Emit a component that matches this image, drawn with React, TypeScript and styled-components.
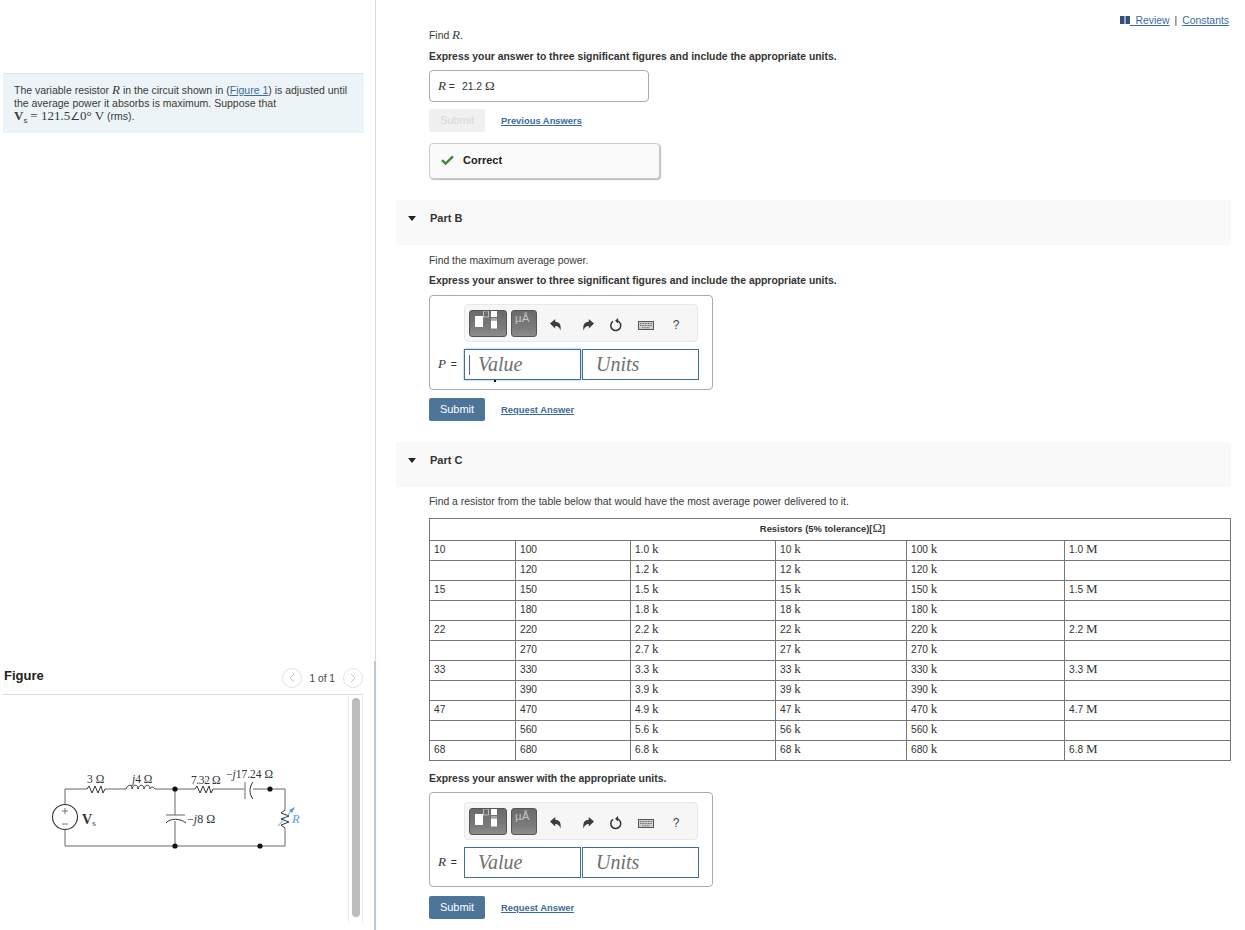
import React from "react";
import styled, { createGlobalStyle } from "styled-components";

const GlobalStyle = createGlobalStyle`
  html, body {
    margin: 0;
    padding: 0;
    background: #fff;
    height: 930px;
    overflow: hidden;
    font-family: "Liberation Sans", Arial, sans-serif;
    color: #333;
  }
`;

const Page = styled.div`
  display: grid;
  grid-template-columns: 376px 1fr;
  width: 1245px;
  height: 930px;
  overflow: hidden;
`;

const LeftColumn = styled.aside`
  display: flex;
  flex-direction: column;
  justify-content: space-between;
  height: 930px;
  box-sizing: border-box;
  padding: 73px 0 7px 3px;
  border-right: 1px solid #d9d9e6;
  position: relative;
`;

const ResizeEdge = styled.div`
  position: absolute;
  right: -1px;
  bottom: 0;
  width: 2px;
  height: 269px;
  background: #bcc6de;
`;

const IntroBox = styled.div`
  width: 361px;
  height: 60px;
  box-sizing: border-box;
  padding: 10px 10px 0 11px;
  background: #ecf4f7;
  border-top: 1px solid #dde6ea;
  font-size: 10.5px;
  line-height: 13px;
  color: #3a3a3a;
`;

const Math = styled.span`
  font-family: "Liberation Serif", "DejaVu Sans", serif;
  font-size: 13px;
  line-height: 0;
  font-weight: normal;
`;

const MathItalic = styled(Math)`
  font-style: italic;
`;

const MathBold = styled(Math)`
  font-weight: bold;
`;

const AngleSign = styled.span`
  font-family: "DejaVu Sans", sans-serif;
  font-size: 11px;
`;

const Sub = styled.sub`
  font-size: 8px;
  line-height: 0;
`;

const NoWrap = styled.span`
  white-space: nowrap;
`;

const TextLink = styled.a`
  color: #3b6d9c;
  text-decoration: underline;
`;

const FigurePanel = styled.section`
  width: 360px;
`;

const FigureHeader = styled.div`
  display: flex;
  align-items: flex-end;
  justify-content: space-between;
  height: 42px;
  padding: 0 0 6px 1px;
  box-sizing: border-box;
  border-bottom: 1px solid #dedede;
`;

const FigureTitle = styled.h2`
  margin: 0 0 5px;
  font-size: 13px;
  line-height: 15px;
  font-weight: bold;
  color: #222;
`;

const Pager = styled.div`
  display: flex;
  align-items: center;
  gap: 8px;
  font-size: 10.2px;
  color: #444;
`;

const PagerButton = styled.span`
  display: flex;
  align-items: center;
  justify-content: center;
  width: 20px;
  height: 20px;
  border: 1px solid #e3e3e3;
  border-radius: 50%;
  box-sizing: border-box;
  color: #c4c4c4;
`;

const FigureBody = styled.div`
  display: flex;
  height: 228px;
`;

const FigureCanvas = styled.div`
  flex: 1;
  padding: 60px 0 0 37px;
`;

const ScrollTrack = styled.div`
  width: 15px;
  box-sizing: border-box;
  padding: 3px 0 0 3px;
  border-left: 1px solid #ececec;
  border-right: 1px solid #ececec;
`;

const ScrollThumb = styled.div`
  width: 8px;
  height: 219px;
  background: #bcbcbc;
  border-radius: 4px;
`;

const RightColumn = styled.main`
  display: flex;
  flex-direction: column;
  padding: 0 14px 0 20px;
  min-width: 0;
`;

const TopLinks = styled.div`
  display: flex;
  justify-content: flex-end;
  align-items: center;
  height: 14px;
  margin-top: 13px;
  margin-right: 2px;
  font-size: 10.4px;
  color: #444;
  gap: 5px;
`;

const BookLink = styled(TextLink)`
  display: inline-flex;
  align-items: center;
  white-space: pre;
`;

const PartBody = styled.div`
  display: flex;
  flex-direction: column;
  align-items: flex-start;
  padding-left: 33px;
`;

const Prompt = styled.p<{ $top: number }>`
  margin: ${(p) => p.$top}px 0 0;
  font-size: 10.4px;
  line-height: 13px;
  color: #3a3a3a;
`;

const Instruction = styled.p<{ $top: number }>`
  margin: ${(p) => p.$top}px 0 0;
  font-size: 10.4px;
  font-weight: bold;
  line-height: 13px;
  color: #333;
`;

const AnswerShown = styled.div`
  display: flex;
  align-items: center;
  gap: 7px;
  width: 220px;
  height: 32px;
  margin-top: 7px;
  padding-left: 8px;
  box-sizing: border-box;
  border: 1px solid #aaa;
  border-radius: 4px;
  font-size: 10.4px;
  color: #333;
`;

const ActionRow = styled.div<{ $top: number }>`
  display: flex;
  align-items: center;
  gap: 16px;
  margin-top: ${(p) => p.$top}px;
`;

const SubmitButton = styled.button<{ $disabled?: boolean }>`
  width: 56px;
  height: 23px;
  padding: 0 0 2px;
  border: none;
  border-radius: 2px;
  font-family: inherit;
  font-size: 11px;
  background: ${(p) => (p.$disabled ? "#f0f0f0" : "#4d7499")};
  color: ${(p) => (p.$disabled ? "#d6d6d6" : "#fff")};
`;

const SmallLink = styled(TextLink)`
  font-size: 9.4px;
  font-weight: bold;
`;

const Feedback = styled.div`
  display: flex;
  align-items: center;
  gap: 9px;
  width: 231px;
  height: 36px;
  margin-top: 11px;
  padding: 0 0 2px 11px;
  box-sizing: border-box;
  border: 1px solid #ccc;
  border-radius: 4px;
  background: #fafafa;
  box-shadow: 1px 1px 1px #bbb;
  font-size: 11px;
  font-weight: bold;
  color: #222;
`;

const PartBar = styled.div<{ $top: number }>`
  display: flex;
  align-items: center;
  gap: 14px;
  height: 45px;
  margin-top: ${(p) => p.$top}px;
  padding: 0 0 9px 12px;
  box-sizing: border-box;
  background: #f9f9f9;
  font-size: 11px;
  font-weight: bold;
  color: #333;
`;

const Caret = styled.span`
  width: 0;
  height: 0;
  border-left: 4.5px solid transparent;
  border-right: 4.5px solid transparent;
  border-top: 5px solid #222;
`;

const AnswerBox = styled.div<{ $top: number; $pad: number }>`
  display: flex;
  flex-direction: column;
  width: 284px;
  height: 95px;
  margin-top: ${(p) => p.$top}px;
  padding: ${(p) => p.$pad}px 0 0 34px;
  box-sizing: border-box;
  border: 1px solid #aaa;
  border-radius: 4px;
`;

const Toolbar = styled.div`
  display: flex;
  align-items: center;
  width: 234px;
  height: 38px;
  box-sizing: border-box;
  padding-left: 4px;
  background: #f6f6f6;
  border: 1px solid #e8e8e8;
  border-radius: 4px;
`;

const GreyButton = styled.span<{ $width: number; $left: number }>`
  display: block;
  width: ${(p) => p.$width}px;
  height: 27px;
  margin-left: ${(p) => p.$left}px;
  flex: none;
  border-radius: 3px;
  background: linear-gradient(#6a6a6a, #7c7c7c 70%, #8d8d8d);
  border: 1px solid #555;
  box-sizing: border-box;
  position: relative;
  color: #cfcfcf;
`;

const MuLabel = styled.span`
  position: absolute;
  left: 3px;
  top: 1px;
  font-family: "Liberation Sans", sans-serif;
  font-size: 11.5px;
  color: #c4c4c4;
`;

const ToolIcon = styled.span<{ $width: number }>`
  display: flex;
  align-items: center;
  justify-content: center;
  width: ${(p) => p.$width}px;
  flex: none;
  margin-top: 4px;
  font-size: 12px;
  color: #444;
`;

const InputRow = styled.div`
  display: flex;
  gap: 1px;
  margin-top: 7px;
  position: relative;
`;

const VarLabel = styled.span`
  position: absolute;
  left: -26px;
  top: 10px;
  font-size: 10.4px;
  word-spacing: 2px;
  color: #333;
`;

const ValueField = styled.div<{ $focused?: boolean }>`
  display: flex;
  align-items: center;
  width: 117px;
  height: 31px;
  padding-left: 13px;
  box-sizing: border-box;
  border: 1px solid #3f6f98;
  font-family: "Liberation Serif", serif;
  font-style: italic;
  font-size: 20px;
  color: #6f6f6f;
  position: relative;
  box-shadow: ${(p) => (p.$focused ? "0 0 2px #7ea6cf" : "none")};
`;

const CursorBar = styled.span`
  position: absolute;
  left: 4px;
  top: 5px;
  width: 1px;
  height: 20px;
  background: #4a63c8;
`;

const StrayDot = styled.span`
  position: absolute;
  left: 29px;
  bottom: -3px;
  width: 2px;
  height: 2px;
  background: #111;
`;

const ResistorTable = styled.table`
  width: 801px;
  margin-top: 10px;
  border-collapse: collapse;
  table-layout: fixed;
  font-size: 10.2px;
  color: #333;
  td, th {
    height: 19px;
    padding: 0 0 2px 4px;
    border: 1px solid #777;
    text-align: left;
    font-weight: normal;
    box-sizing: border-box;
  }
  th {
    height: 22px;
    text-align: center;
    font-weight: bold;
    font-size: 9.4px;
    padding: 0 15px 2px 0;
  }
  tr {
    height: 20px;
  }
`;

const UndoIcon = ({ flip }: { flip?: boolean }) => (
  <svg width="12" height="12" viewBox="0 0 12 12" style={flip ? { transform: "scaleX(-1)" } : undefined}>
    <path d="M0 4.5 L5.2 0 V2.8 C9 2.8 11.5 5.5 10.5 11.5 C9.8 8.8 8 7 5.2 7 V9.5 Z" fill="#3d3d3d" />
  </svg>
);

const ResetIcon = () => (
  <svg width="14" height="14" viewBox="0 0 14 14">
    <path d="M8.6 2.9 A5 5 0 1 1 4 3.4" fill="none" stroke="#333" strokeWidth="1.5" />
    <path d="M7.6 0 L7.6 5.6 L10.6 2.8 Z" fill="#333" transform="rotate(180 7.6 2.8) translate(-1.5 0)" />
  </svg>
);

const KeyboardIcon = () => (
  <svg width="16" height="9" viewBox="0 0 16 9">
    <rect x="0.5" y="0.5" width="15" height="8" fill="#cfcfcf" stroke="#555" />
    <path d="M2 2.5 H14 M2 4.5 H14 M4 6.7 H12" stroke="#6a6a6a" strokeWidth="1" strokeDasharray="1 0.6" />
  </svg>
);

const TemplateGlyph = () => (
  <svg width="36" height="25" viewBox="0 0 36 25" style={{ display: "block" }}>
    <rect x="5" y="5" width="8" height="11" fill="#fff" />
    <rect x="13.5" y="0" width="5" height="6" fill="none" stroke="#cfcfcf" strokeWidth="0.8" />
    <rect x="21" y="0" width="6" height="6" fill="#fff" />
    <rect x="21" y="7.5" width="6" height="1" fill="#ddd" />
    <rect x="21" y="9.5" width="6" height="8" fill="#fff" />
  </svg>
);

const MathToolbar = () => (
  <Toolbar>
    <GreyButton $width={38} $left={0}>
      <TemplateGlyph />
    </GreyButton>
    <GreyButton $width={26} $left={4}>
      <MuLabel>µÅ</MuLabel>
    </GreyButton>
    <ToolIcon $width={38}>
      <UndoIcon />
    </ToolIcon>
    <ToolIcon $width={25}>
      <UndoIcon flip />
    </ToolIcon>
    <ToolIcon $width={32}>
      <ResetIcon />
    </ToolIcon>
    <ToolIcon $width={28}>
      <KeyboardIcon />
    </ToolIcon>
    <ToolIcon $width={32}>?</ToolIcon>
  </Toolbar>
);

const CircuitDiagram = () => (
  <svg width="270" height="110" viewBox="0 0 270 110" style={{ display: "block" }}>
    <g fill="none" stroke="#666" strokeWidth="1">
      <path d="M25 50 V34 H47 M65 34 H86 M115 34 H155 M173 34 H204 M213 34 H245 V55 M245 73 V91 H25 V74" />
      <path d="M135 34 V60 M135 66 V91" />
      <path d="M126 60 H145" />
      <path d="M205 27 V44" />
    </g>
    <g fill="none" stroke="#333" strokeWidth="1">
      <circle cx="25" cy="62" r="12.5" strokeWidth="1.1" />
      <path d="M47 34 L49 31 L52 38 L55 31 L58 38 L61 31 L63 38 L65 34" />
      <path d="M86 34 C88 29 92 29 92 34 C93 29 98 29 98 34 C99 29 104 29 104 34 C105 29 110 29 110 34 C111 31 114 32 115 34" />
      <path d="M155 34 L157 31 L160 38 L163 31 L166 38 L169 31 L171 38 L173 34" />
      <path d="M213 27 C209 32 209 39 213 44" />
      <path d="M126 68 C130 63 140 63 146 68" />
      <path d="M245 55 L241 58 L249 61 L241 64 L249 67 L241 70 L245 73" />
    </g>
    <path d="M238 71 L253 54" stroke="#5b9bea" strokeWidth="1" />
    <path d="M255 52 L249 55 L252 58 Z" fill="#5b9bea" />
    <g fill="#111">
      <circle cx="135" cy="34" r="2.6" />
      <circle cx="230" cy="34" r="2.6" />
      <circle cx="135" cy="91" r="2.6" />
      <circle cx="220" cy="91" r="2.6" />
    </g>
    <g fontFamily="Liberation Serif, serif" fontSize="11.5" fill="#333">
      <path d="M22 56 H28 M25 53 V59 M22 69 H28" stroke="#555" strokeWidth="0.8" />
      <text x="47" y="28">3 Ω</text>
      <text x="92" y="28"><tspan fontStyle="italic">j</tspan>4 Ω</text>
      <text x="151" y="29" letterSpacing="-0.4">7.32 Ω</text>
      <text x="186" y="23"><tspan>−</tspan><tspan fontStyle="italic">j</tspan>17.24 Ω</text>
      <text x="147" y="68" fontSize="12"><tspan>−</tspan><tspan fontStyle="italic">j</tspan>8 Ω</text>
      <text x="42" y="69" fontWeight="bold" fontSize="14">V<tspan fontWeight="normal" fontSize="9" dy="2">s</tspan></text>
      <text x="252" y="68" fontStyle="italic" fill="#5b9bea" fontSize="12.5">R</text>
    </g>
  </svg>
);

type Kilo = { a?: string; b: string; c: string; d: string; e: string; f?: string };

const rows: Kilo[] = [
  { a: "10", b: "100", c: "1.0", d: "10", e: "100", f: "1.0" },
  { b: "120", c: "1.2", d: "12", e: "120" },
  { a: "15", b: "150", c: "1.5", d: "15", e: "150", f: "1.5" },
  { b: "180", c: "1.8", d: "18", e: "180" },
  { a: "22", b: "220", c: "2.2", d: "22", e: "220", f: "2.2" },
  { b: "270", c: "2.7", d: "27", e: "270" },
  { a: "33", b: "330", c: "3.3", d: "33", e: "330", f: "3.3" },
  { b: "390", c: "3.9", d: "39", e: "390" },
  { a: "47", b: "470", c: "4.9", d: "47", e: "470", f: "4.7" },
  { b: "560", c: "5.6", d: "56", e: "560" },
  { a: "68", b: "680", c: "6.8", d: "68", e: "680", f: "6.8" },
];

const Unit = ({ children }: { children: string }) => <Math>{children}</Math>;

const App = () => {
  return (
    <>
      <GlobalStyle />
      <Page>
        <LeftColumn>
          <IntroBox>
            The variable resistor <MathItalic>R</MathItalic> in the circuit shown in (<TextLink>Figure 1</TextLink>) is
            adjusted until the average power it absorbs is maximum. Suppose that{" "}
            <NoWrap>
              <MathBold>V</MathBold>
              <Sub>s</Sub> <Math>= 121.5<AngleSign>∠</AngleSign>0° </Math>
              <Math>V</Math> (rms).
            </NoWrap>
          </IntroBox>
          <FigurePanel>
            <FigureHeader>
              <FigureTitle>Figure</FigureTitle>
              <Pager>
                <PagerButton>
                  <svg width="6" height="10" viewBox="0 0 6 10">
                    <path d="M5 1 L1 5 L5 9" fill="none" stroke="currentColor" />
                  </svg>
                </PagerButton>
                <span>1 of 1</span>
                <PagerButton>
                  <svg width="6" height="10" viewBox="0 0 6 10">
                    <path d="M1 1 L5 5 L1 9" fill="none" stroke="currentColor" />
                  </svg>
                </PagerButton>
              </Pager>
            </FigureHeader>
            <FigureBody>
              <FigureCanvas>
                <CircuitDiagram />
              </FigureCanvas>
              <ScrollTrack>
                <ScrollThumb />
              </ScrollTrack>
            </FigureBody>
          </FigurePanel>
          <ResizeEdge />
        </LeftColumn>
        <RightColumn>
          <TopLinks>
            <BookLink>
              <svg width="10" height="8" viewBox="0 0 10 8">
                <path d="M0 0 H4.5 V8 H0 Z M5.5 0 H10 V8 H5.5 Z" fill="#2f5277" />
              </svg>
              {"  Review"}
            </BookLink>
            <span>|</span>
            <TextLink>Constants</TextLink>
          </TopLinks>
          <PartBody>
            <Prompt $top={2}>
              Find <MathItalic>R</MathItalic>.
            </Prompt>
            <Instruction $top={8}>Express your answer to three significant figures and include the appropriate units.</Instruction>
            <AnswerShown>
              <span>
                <MathItalic>R</MathItalic> =
              </span>
              <span>
                21.2 <Unit>Ω</Unit>
              </span>
            </AnswerShown>
            <ActionRow $top={7}>
              <SubmitButton $disabled>Submit</SubmitButton>
              <SmallLink>Previous Answers</SmallLink>
            </ActionRow>
            <Feedback>
              <svg width="13" height="10" viewBox="0 0 13 10">
                <path d="M1 5.2 L4.6 8.6 L12 1.4" fill="none" stroke="#47843e" strokeWidth="2.4" />
              </svg>
              Correct
            </Feedback>
          </PartBody>
          <PartBar $top={21}>
            <Caret />
            Part B
          </PartBar>
          <PartBody>
            <Prompt $top={9}>Find the maximum average power.</Prompt>
            <Instruction $top={7}>Express your answer to three significant figures and include the appropriate units.</Instruction>
            <AnswerBox $top={8} $pad={8}>
              <MathToolbar />
              <InputRow>
                <VarLabel>
                  <MathItalic>P</MathItalic> =
                </VarLabel>
                <ValueField $focused>
                  <CursorBar />
                  Value
                  <StrayDot />
                </ValueField>
                <ValueField>Units</ValueField>
              </InputRow>
            </AnswerBox>
            <ActionRow $top={8}>
              <SubmitButton>Submit</SubmitButton>
              <SmallLink>Request Answer</SmallLink>
            </ActionRow>
          </PartBody>
          <PartBar $top={21}>
            <Caret />
            Part C
          </PartBar>
          <PartBody>
            <Prompt $top={8}>Find a resistor from the table below that would have the most average power delivered to it.</Prompt>
            <ResistorTable>
              <colgroup>
                <col style={{ width: 86 }} />
                <col style={{ width: 115 }} />
                <col style={{ width: 145 }} />
                <col style={{ width: 131 }} />
                <col style={{ width: 158 }} />
                <col style={{ width: 166 }} />
              </colgroup>
              <thead>
                <tr>
                  <th colSpan={6}>
                    Resistors (5% tolerance)[<Unit>Ω</Unit>]
                  </th>
                </tr>
              </thead>
              <tbody>
                {rows.map((r) => (
                  <tr key={r.b}>
                    <td>{r.a}</td>
                    <td>{r.b}</td>
                    <td>
                      {r.c} <Unit>k</Unit>
                    </td>
                    <td>
                      {r.d} <Unit>k</Unit>
                    </td>
                    <td>
                      {r.e} <Unit>k</Unit>
                    </td>
                    <td>
                      {r.f && (
                        <>
                          {r.f} <Unit>M</Unit>
                        </>
                      )}
                    </td>
                  </tr>
                ))}
              </tbody>
            </ResistorTable>
            <Instruction $top={11}>Express your answer with the appropriate units.</Instruction>
            <AnswerBox $top={7} $pad={9}>
              <MathToolbar />
              <InputRow>
                <VarLabel>
                  <MathItalic>R</MathItalic> =
                </VarLabel>
                <ValueField>Value</ValueField>
                <ValueField>Units</ValueField>
              </InputRow>
            </AnswerBox>
            <ActionRow $top={9}>
              <SubmitButton>Submit</SubmitButton>
              <SmallLink>Request Answer</SmallLink>
            </ActionRow>
          </PartBody>
        </RightColumn>
      </Page>
    </>
  );
};

export default App;
